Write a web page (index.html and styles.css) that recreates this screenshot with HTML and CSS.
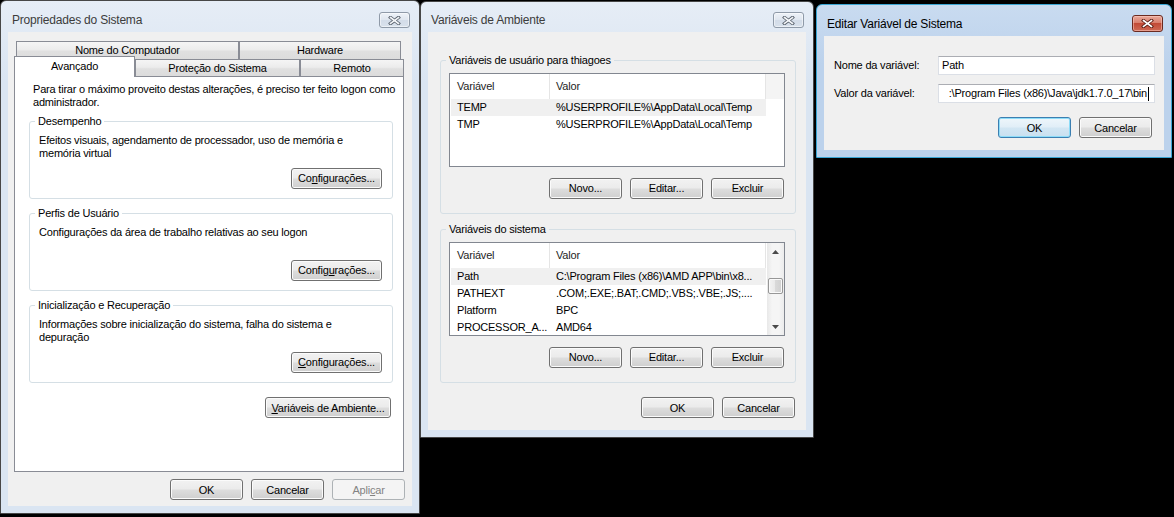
FILE: index.html
```
<!DOCTYPE html>
<html lang="pt-BR">
	<head>
		<meta charset="utf-8">
		<title>Variáveis de Ambiente</title>
		<link rel="stylesheet" href="styles.css">
	</head>
	<body>

<!-- Propriedades do Sistema -->
<div class="window inactive" id="props">
	<div class="titlebar">
		<span class="title">Propriedades do Sistema</span>
		<span class="close"><svg width="13" height="9" viewBox="0 0 13 9"><path d="M2.5 1.5 L10.5 7.5 M10.5 1.5 L2.5 7.5" stroke="#59626d" stroke-width="3.4" stroke-linecap="square"/><path d="M2.5 1.5 L10.5 7.5 M10.5 1.5 L2.5 7.5" stroke="#f4f6f9" stroke-width="1.6" stroke-linecap="square"/></svg></span>
	</div>
	<div class="client">
		<div class="tabs">
			<div class="tabrow back">
				<div class="tab tab-nome">Nome do Computador</div>
				<div class="tab tab-hw">Hardware</div>
			</div>
			<div class="tabrow front">
				<div class="tab tab-adv selected">Avançado</div>
				<div class="tab tab-prot">Proteção do Sistema</div>
				<div class="tab tab-rem">Remoto</div>
			</div>
			<div class="tabpanel">
				<p class="intro">Para tirar o máximo proveito destas alterações, é preciso ter feito logon como administrador.</p>

				<div class="group">
					<span class="group-title">Desempenho</span>
					<p>Efeitos visuais, agendamento de processador, uso de memória e memória virtual</p>
					<button class="btn btn-cfg">Co<u>n</u>figurações...</button>
				</div>

				<div class="group">
					<span class="group-title">Perfis de Usuário</span>
					<p>Configurações da área de trabalho relativas ao seu logon</p>
					<button class="btn btn-cfg">Config<u>u</u>rações...</button>
				</div>

				<div class="group">
					<span class="group-title">Inicialização e Recuperação</span>
					<p>Informações sobre inicialização do sistema, falha do sistema e depuração</p>
					<button class="btn btn-cfg"><u>C</u>onfigurações...</button>
				</div>

				<button class="btn btn-env"><u>V</u>ariáveis de Ambiente...</button>
			</div>
		</div>
		<div class="buttons">
			<button class="btn">OK</button>
			<button class="btn">Cancelar</button>
			<button class="btn" disabled>Apli<u>c</u>ar</button>
		</div>
	</div>
</div>

<!-- Variáveis de Ambiente -->
<div class="window inactive" id="env">
	<div class="titlebar">
		<span class="title">Variáveis de Ambiente</span>
		<span class="close"><svg width="13" height="9" viewBox="0 0 13 9"><path d="M2.5 1.5 L10.5 7.5 M10.5 1.5 L2.5 7.5" stroke="#59626d" stroke-width="3.4" stroke-linecap="square"/><path d="M2.5 1.5 L10.5 7.5 M10.5 1.5 L2.5 7.5" stroke="#f4f6f9" stroke-width="1.6" stroke-linecap="square"/></svg></span>
	</div>
	<div class="client">
		<div class="group env-group">
			<span class="group-title">Variáveis de usuário para thiagoes</span>
			<div class="list">
				<div class="list-main">
					<div class="list-head">
						<div class="col-name">Variável</div>
						<div class="col-val">Valor</div>
						<div class="col-fill"></div>
					</div>
					<div class="row sel"><div class="col-name">TEMP</div><div class="col-val">%USERPROFILE%\AppData\Local\Temp</div></div>
					<div class="row"><div class="col-name">TMP</div><div class="col-val">%USERPROFILE%\AppData\Local\Temp</div></div>
				</div>
			</div>
			<div class="list-buttons">
				<button class="btn">Novo...</button>
				<button class="btn">Editar...</button>
				<button class="btn">Excluir</button>
			</div>
		</div>

		<div class="group env-group">
			<span class="group-title">Variáveis do sistema</span>
			<div class="list">
				<div class="list-main">
					<div class="list-head">
						<div class="col-name">Variável</div>
						<div class="col-val">Valor</div>
					</div>
					<div class="row sel"><div class="col-name">Path</div><div class="col-val">C:\Program Files (x86)\AMD APP\bin\x8...</div></div>
					<div class="row"><div class="col-name">PATHEXT</div><div class="col-val">.COM;.EXE;.BAT;.CMD;.VBS;.VBE;.JS;....</div></div>
					<div class="row"><div class="col-name">Platform</div><div class="col-val">BPC</div></div>
					<div class="row"><div class="col-name">PROCESSOR_A...</div><div class="col-val">AMD64</div></div>
				</div>
				<div class="scrollbar">
					<div class="arrow"><svg width="7" height="4" viewBox="0 0 7 4"><path d="M0 4 L3.5 0 L7 4 Z" fill="#4a4a4a"/></svg></div>
					<div class="track"><div class="thumb"></div></div>
					<div class="arrow"><svg width="7" height="4" viewBox="0 0 7 4"><path d="M0 0 L7 0 L3.5 4 Z" fill="#4a4a4a"/></svg></div>
				</div>
			</div>
			<div class="list-buttons">
				<button class="btn">Novo...</button>
				<button class="btn">Editar...</button>
				<button class="btn">Excluir</button>
			</div>
		</div>

		<div class="buttons env-buttons">
			<button class="btn">OK</button>
			<button class="btn">Cancelar</button>
		</div>
	</div>
</div>

<!-- Editar Variável de Sistema -->
<div class="window active" id="edit">
	<div class="titlebar">
		<span class="title">Editar Variável de Sistema</span>
		<span class="close red"><svg width="13" height="9" viewBox="0 0 13 9"><path d="M2.5 1.5 L10.5 7.5 M10.5 1.5 L2.5 7.5" stroke="#5a1d14" stroke-width="3.4" stroke-linecap="square"/><path d="M2.5 1.5 L10.5 7.5 M10.5 1.5 L2.5 7.5" stroke="#ffffff" stroke-width="1.6" stroke-linecap="square"/></svg></span>
	</div>
	<div class="client">
		<div class="field">
			<label>Nome da variável:</label>
			<div class="input">Path</div>
		</div>
		<div class="field">
			<label>Valor da variável:</label>
			<div class="input scrolled"><span>:\Program Files (x86)\Java\jdk1.7.0_17\bin</span><i class="caret"></i></div>
		</div>
		<div class="buttons edit-buttons">
			<button class="btn default">OK</button>
			<button class="btn">Cancelar</button>
		</div>
	</div>
</div>

	</body>
</html>
```

FILE: styles.css
```
* { -moz-box-sizing: border-box; -webkit-box-sizing: border-box; box-sizing: border-box; }

html, body {
	height: 100%;
}

body {
	margin: 0;
	width: 1174px;
	height: 517px;
	overflow: hidden;
	position: relative;
	background: #000;
	color: #000;
	font-family: "Liberation Sans", Arial, sans-serif;
	font-size: 11px;
	letter-spacing: -0.2px;
}

p { margin: 0; }

/* windows */

.window {
	position: absolute;
	display: flex;
	flex-direction: column;
	padding: 0 7px 7px;
	border: 1px solid #474747;
	border-radius: 6px 6px 0 0;
}

.window.inactive {
	background: linear-gradient(#e6edf6, #dae5f2 80px, #dae5f2);
}

.window.active {
	border-color: #3aa6d4;
	background: linear-gradient(#c9dbf0, #bcd2ec 60px, #bcd2ec);
}

#props { left: 0; top: 0; width: 420px; height: 514px; }
#env { left: 420px; top: 1px; width: 394px; height: 437px; }
#edit { left: 816px; top: 4px; width: 356px; height: 154px; }

.titlebar {
	height: 31px;
	padding: 7px 0 0 3px;
	display: flex;
	align-items: center;
	justify-content: space-between;
	flex-shrink: 0;
}

#props .titlebar { padding-left: 4px; }
#env .titlebar { height: 30px; padding-top: 6px; }
#edit .titlebar { padding-top: 6px; }

.title {
	font-size: 12px;
	color: #3c3c3c;
}

.active .title { color: #000; }

.close {
	width: 31px;
	height: 16px;
	margin-right: 2px;
	display: flex;
	align-items: center;
	justify-content: center;
	border: 1px solid #8f9aa8;
	border-radius: 3px;
	background: linear-gradient(#eef2f8, #dfe6ef 50%, #d3dce8 50%, #d8e1ec);
	box-shadow: inset 0 0 0 1px rgba(255,255,255,.5);
}

.close.red {
	height: 17px;
	margin-right: 1px;
	border-color: #6b2a20;
	background: linear-gradient(#e9a99b, #d77a68 50%, #c24a36 50%, #cf6a55);
	box-shadow: inset 0 0 0 1px rgba(255,210,200,.5);
}

.client {
	flex: 1;
	background: #f0f0f0;
}

/* buttons */

.btn {
	width: 73px;
	height: 21px;
	padding: 0;
	border: 1px solid #707070;
	border-radius: 3px;
	background: linear-gradient(#f2f2f2, #ebebeb 48%, #dddddd 52%, #cfcfcf);
	box-shadow: inset 0 0 0 1px #fbfbfb;
	font: inherit;
	letter-spacing: inherit;
	color: #000;
	text-align: center;
}

.btn:disabled {
	border-color: #adb2b5;
	background: #f4f4f4;
	box-shadow: none;
	color: #838383;
}

.btn.default {
	border-color: #3c7fb1;
	background: linear-gradient(#eef6fb, #e1eef7 48%, #d2e6f3 52%, #c9e0f0);
	box-shadow: inset 0 0 0 1px #8ddcf8;
}

.buttons {
	display: flex;
	justify-content: flex-end;
	gap: 8px;
}

/* tabs */

.tabs {
	margin: 9px 0 0 6px;
	width: 390px;
}

.tabrow {
	display: flex;
}

.tabrow.back {
	height: 18px;
	margin-left: 2px;
}

.tabrow.front {
	height: 17px;
}

.tab {
	height: 18px;
	padding-top: 1px;
	border: 1px solid #898c95;
	border-bottom: none;
	background: linear-gradient(#f5f5f5, #ececec 45%, #e0e0e0 55%, #dcdcdc);
	text-align: center;
	line-height: 15px;
}

.front .tab { height: 17px; padding-top: 1px; }

.tab-nome { width: 223px; }
.tab-hw { width: 162px; }
.tab-adv { width: 121px; }
.tab-prot { width: 165px; }
.tab-rem { width: 104px; }

.front .tab.selected {
	position: relative;
	z-index: 1;
	height: 21px;
	margin-top: -3px;
	padding-top: 2px;
	background: #fff;
}

.tabpanel {
	height: 396px;
	padding: 6px 10px 0 14px;
	border: 1px solid #898c95;
	background: #fff;
	display: flex;
	flex-direction: column;
}

.intro {
	margin: 0 -8px 0 4px;
	line-height: 13px;
}

/* group boxes */

.group {
	position: relative;
	height: 78px;
	margin-top: 14px;
	padding: 12px 10px 9px 9px;
	border: 1px solid #d5dfe5;
	border-radius: 3px;
	display: flex;
	flex-direction: column;
	line-height: 13px;
}

.tabpanel .intro + .group { margin-top: 12px; }

.group-title {
	position: absolute;
	top: -7px;
	left: 5px;
	padding: 0 3px;
	background: #fff;
	line-height: 13px;
}

.btn-cfg {
	width: 91px;
	margin-top: auto;
	align-self: flex-end;
}

.btn-env {
	width: 126px;
	margin: 14px 2px 0 0;
	align-self: flex-end;
}

#props .buttons {
	margin-top: 7px;
	padding-right: 7px;
}

/* environment window */

.env-group {
	height: 154px;
	margin: 15px 10px 0 12px;
	padding: 12px 10px 0 8px;
}

.env-group:first-child { margin-top: 28px; }

.env-group .group-title { background: #f0f0f0; }

.list {
	height: 94px;
	display: flex;
	border: 1px solid #828790;
	background: #fff;
	overflow: hidden;
	line-height: 17px;
}

.list-main {
	flex: 1;
}

.list-head {
	display: flex;
	height: 25px;
	line-height: 24px;
	color: #1e1e1e;
}

.list-head .col-name {
	width: 100px;
	padding-left: 7px;
	border-right: 1px solid #e5e5e5;
}

.list-head .col-val {
	width: 216px;
	padding-left: 6px;
	border-right: 1px solid #e5e5e5;
}

.list-head .col-fill {
	flex: 1;
	background: #f4f4f4;
}

.row {
	display: flex;
	width: 315px;
	height: 17px;
	margin-left: 1px;
	white-space: nowrap;
}

.row.sel { background: #f0f0f0; }

.row .col-name {
	width: 99px;
	padding-left: 6px;
}

.row .col-val {
	padding-left: 6px;
}

.list-buttons {
	display: flex;
	justify-content: flex-end;
	gap: 8px;
	margin-top: 11px;
	margin-right: 1px;
}

.scrollbar {
	width: 17px;
	display: flex;
	flex-direction: column;
	background: linear-gradient(90deg, #e8e8e8, #f5f5f5 30%, #f5f5f5 70%, #ececec);
}

.arrow {
	height: 17px;
	display: flex;
	align-items: center;
	justify-content: center;
}

.track {
	flex: 1;
	padding-top: 18px;
}

.thumb {
	width: 15px;
	height: 16px;
	margin-left: 1px;
	border: 1px solid #979797;
	border-radius: 2px;
	background: linear-gradient(90deg, #f3f3f3, #e8e8e8 50%, #d9d9d9 50%, #d0d0d0);
	box-shadow: inset 0 0 0 1px #fafafa;
}

.env-buttons {
	margin-top: 14px;
	padding-right: 11px;
}

/* edit window */

#edit .client {
	padding: 20px 0 0 10px;
}

.field {
	display: flex;
	align-items: center;
	height: 19px;
}

.field + .field { margin-top: 9px; }

.field label {
	width: 104px;
	margin-top: -2px;
}

.input {
	width: 217px;
	height: 19px;
	padding-left: 3px;
	border: 1px solid #dbdfe6;
	border-top-color: #abadb3;
	background: #fff;
	line-height: 17px;
	white-space: nowrap;
	overflow: hidden;
}

.input.scrolled {
	display: flex;
	justify-content: flex-end;
	padding-right: 5px;
}

.caret {
	width: 1px;
	height: 14px;
	margin: 2px 0 0 1px;
	background: #000;
}

.edit-buttons {
	margin-top: 14px;
	padding-right: 12px;
}
```
